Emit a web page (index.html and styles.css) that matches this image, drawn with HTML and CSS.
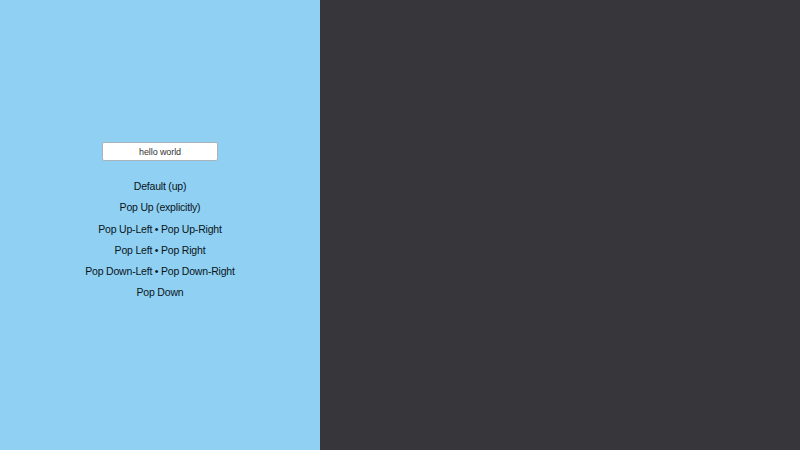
FILE: index.html
```html
<!DOCTYPE html>
<html>
<head>
<meta charset="utf-8">
<link rel="stylesheet" href="styles.css">
</head>
<body>
<div class="app">
  <div class="panel">
    <input class="field" type="text" value="hello world">
    <ul class="options">
      <li>Default (up)</li>
      <li>Pop Up (explicitly)</li>
      <li>Pop Up-Left • Pop Up-Right</li>
      <li>Pop Left • Pop Right</li>
      <li>Pop Down-Left • Pop Down-Right</li>
      <li>Pop Down</li>
    </ul>
  </div>
  <div class="stage"></div>
</div>
</body>
</html>
```
FILE: styles.css
```css
html, body {
  margin: 0;
  padding: 0;
  height: 100%;
}
body {
  font-family: "Liberation Sans", Arial, sans-serif;
}
.app {
  display: flex;
  height: 450px;
  width: 800px;
}
.panel {
  width: 320px;
  background: #8fd0f3;
  display: flex;
  flex-direction: column;
  align-items: center;
  padding-top: 142px;
  box-sizing: border-box;
}
.field {
  box-sizing: border-box;
  width: 116px;
  height: 19px;
  margin: 0;
  padding: 0 4px;
  border: 1px solid #a9b4ba;
  border-radius: 2px;
  background: #ffffff;
  font-family: "Liberation Sans", Arial, sans-serif;
  font-size: 9px;
  letter-spacing: -0.1px;
  color: #333333;
  text-align: center;
  outline: none;
}
.options {
  list-style: none;
  margin: 15px 0 0;
  padding: 0;
  text-align: center;
  font-size: 10.5px;
  letter-spacing: -0.2px;
  line-height: 21.3px;
  color: #0b1520;
}
.stage {
  flex: 1;
  background: #37363b;
}
```
